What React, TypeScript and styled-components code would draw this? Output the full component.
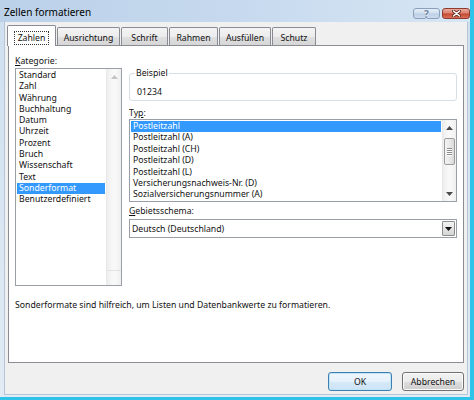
import React from "react";
import styled, { createGlobalStyle } from "styled-components";

const UI_FONT = `"Noto Sans", "Open Sans", "DejaVu Sans", sans-serif`;

const GlobalStyle = createGlobalStyle`
  *, *::before, *::after { box-sizing: border-box; }
  html, body { margin: 0; padding: 0; }
  body {
    width: 474px;
    height: 400px;
    overflow: hidden;
    background: #2ec4ea;
    font-family: ${UI_FONT};
    font-size: 8.7px;
    color: #111;
  }
`;

/* ---------- window chrome ---------- */

const Desktop = styled.div`
  width: 474px;
  height: 400px;
  display: flex;
  padding: 0 4px 3px 0;
  background: #2ec4ea;
`;

const Window = styled.div`
  flex: 1;
  min-width: 0;
  display: flex;
  flex-direction: column;
  padding: 0 2px 2px 4px;
  background: linear-gradient(180deg, #c0d5eb 0px, #d0e0f0 24px, #e2ebf4 100%);
`;

const TitleBar = styled.div`
  flex: none;
  height: 22px;
  display: flex;
  align-items: flex-start;
  margin: 0 -2px 0 -4px;
  padding-left: 4px;
  background: linear-gradient(90deg, #bbd1e9 0%, #c6d9ee 50%, #d7e6f4 100%);
`;

const TitleText = styled.div`
  padding-top: 5px;
  font-size: 10px;
  line-height: 14px;
  color: #000;
`;

const CaptionGroup = styled.div`
  margin-left: auto;
  margin-top: 8px;
  display: flex;
  gap: 2px;
`;

const CaptionButton = styled.div<{ $close?: boolean }>`
  width: ${(p) => (p.$close ? 28 : 27)}px;
  height: 11px;
  display: flex;
  align-items: center;
  justify-content: center;
  border: 1px solid ${(p) => (p.$close ? "#8f3b30" : "#8aa0ba")};
  border-radius: 3px;
  background: ${(p) =>
    p.$close
      ? "linear-gradient(180deg, #eaa99a 0%, #d9806f 48%, #c5462f 52%, #d8705b 100%)"
      : "linear-gradient(180deg, #e6eef7 0%, #cfdeee 48%, #bccfe5 52%, #cadcef 100%)"};
  font-size: 10px;
  font-weight: bold;
  line-height: 1;
  color: #6f86a3;
  text-shadow: 0 1px 0 rgba(255, 255, 255, 0.8);
`;

const Client = styled.div`
  flex: 1;
  display: flex;
  flex-direction: column;
  background: #f0f0f0;
  border: 1px solid #b4c5d7;
  border-top: none;
  padding: 3px 3px 0 3px;
`;

/* ---------- tabs ---------- */

const TabStrip = styled.div`
  position: relative;
  z-index: 1;
  height: 21px;
  margin: 0 0 -1px -1px;
  display: flex;
  align-items: flex-end;
  gap: 1px;
`;

const Tab = styled.div<{ $active?: boolean; $w: number }>`
  width: ${(p) => p.$w}px;
  height: ${(p) => (p.$active ? 21 : 18)}px;
  margin-bottom: ${(p) => (p.$active ? 0 : 1)}px;
  padding-top: ${(p) => (p.$active ? 4 : 3)}px;
  display: flex;
  align-items: center;
  justify-content: center;
  border: 1px solid #898c95;
  border-bottom: none;
  border-radius: 2px 2px 0 0;
  background: ${(p) =>
    p.$active
      ? "#ffffff"
      : "linear-gradient(180deg, #f4f4f4 0%, #ececec 50%, #e0e0e0 51%, #d6d6d6 100%)"};
  line-height: 12px;
  white-space: nowrap;
`;

const FocusText = styled.span`
  padding: 0 3px;
  border: 1px dotted #333;
  line-height: 12px;
`;

const Panel = styled.div`
  flex: none;
  height: 318px;
  display: flex;
  flex-direction: column;
  border: 1px solid #898c95;
  background: #ffffff;
  padding: 9px 6px 0;
`;

const Columns = styled.div`
  display: grid;
  grid-template-columns: 107px 328px;
  column-gap: 7px;
  align-items: start;
`;

const Column = styled.div<{ $top?: number }>`
  display: flex;
  flex-direction: column;
  padding-top: ${(p) => p.$top ?? 0}px;
`;

const FieldLabel = styled.div<{ $gap?: number }>`
  height: 12px;
  line-height: 12px;
  margin-top: ${(p) => p.$gap ?? 0}px;
  white-space: nowrap;
`;

const Key = styled.span`
  text-decoration: underline;
  text-underline-offset: 1px;
`;

/* ---------- list boxes ---------- */

const ListBox = styled.div<{ $h: number; $gap?: number }>`
  height: ${(p) => p.$h}px;
  margin-top: ${(p) => p.$gap ?? 0}px;
  display: flex;
  border: 1px solid #9a9ea6;
  background: #ffffff;
  overflow: hidden;
`;

const ListItems = styled.div`
  flex: 1;
  min-width: 0;
  padding: 1px;
`;

const ListItem = styled.div<{ $selected?: boolean; $lh: number }>`
  height: ${(p) => p.$lh}px;
  line-height: ${(p) => p.$lh}px;
  padding-left: 2px;
  white-space: nowrap;
  background: ${(p) => (p.$selected ? "#3399ff" : "transparent")};
  color: ${(p) => (p.$selected ? "#ffffff" : "#111")};
`;

const ScrollBar = styled.div<{ $w: number }>`
  flex: none;
  width: ${(p) => p.$w}px;
  display: flex;
  flex-direction: column;
  background: linear-gradient(90deg, #eeeeee 0%, #f8f8f8 40%, #f8f8f8 60%, #efefef 100%);
  border-left: 1px solid #e8e8e8;
`;

const ArrowCell = styled.div`
  height: 15px;
  flex: none;
  display: flex;
  align-items: center;
  justify-content: center;
`;

const Track = styled.div`
  flex: 1;
  padding: 3px 1px 0;
`;

const Thumb = styled.div`
  height: 27px;
  display: flex;
  flex-direction: column;
  align-items: center;
  justify-content: center;
  gap: 1px;
  border: 1px solid #9c9c9c;
  border-radius: 2px;
  background: linear-gradient(90deg, #f3f3f3 0%, #e9e9e9 50%, #d9d9d9 100%);
`;

const Grip = styled.div`
  width: 5px;
  height: 1px;
  background: #8c8c8c;
  box-shadow: 0 1px 0 #ffffff;
`;

const BottomCap = styled.div`
  height: 15px;
  flex: none;
  border-top: 1px solid #e2e2e2;
  display: flex;
  align-items: center;
  justify-content: center;
`;

const Arrow = ({ down, color }: { down?: boolean; color: string }) => (
  <svg width="7" height="4" viewBox="0 0 7 4">
    <polygon points={down ? "0,0 7,0 3.5,4" : "0,4 7,4 3.5,0"} fill={color} />
  </svg>
);

/* ---------- group box ---------- */

const Group = styled.fieldset`
  margin: 0;
  min-width: 0;
  padding: 7px 6px 2px 7px;
  border: 1px solid #d5dfe5;
  border-radius: 3px;
`;

const GroupTitle = styled.legend`
  margin-left: -2px;
  padding: 0 1px;
  line-height: 12px;
`;

const SampleValue = styled.div`
  line-height: 12px;
  height: 12px;
`;

/* ---------- combo box ---------- */

const Combo = styled.div`
  height: 19px;
  margin-top: 2px;
  display: flex;
  align-items: center;
  border: 1px solid #9a9ea6;
  background: #ffffff;
  padding: 1px 0 1px 2px;
`;

const ComboText = styled.div`
  flex: 1;
  line-height: 12px;
`;

const ComboButton = styled.div`
  flex: none;
  width: 13px;
  height: 15px;
  margin-right: 1px;
  display: flex;
  align-items: center;
  justify-content: center;
  border: 1px solid #8d8d8d;
  border-radius: 1px;
  background: linear-gradient(180deg, #f4f4f4 0%, #e4e4e4 50%, #d4d4d4 100%);
`;

const Hint = styled.div`
  margin-top: 13px;
  line-height: 12px;
`;

/* ---------- dialog buttons ---------- */

const ButtonRow = styled.div`
  display: flex;
  justify-content: flex-end;
  gap: 10px;
  padding-top: 9px;
`;

const DialogButton = styled.div<{ $default?: boolean; $w: number }>`
  width: ${(p) => p.$w}px;
  height: 19px;
  display: flex;
  align-items: center;
  justify-content: center;
  border: 1px solid ${(p) => (p.$default ? "#3c7fb1" : "#707070")};
  border-radius: 3px;
  background: ${(p) =>
    p.$default
      ? "linear-gradient(180deg, #f0f7fc 0%, #e5f1fb 50%, #d6eaf8 51%, #cde4f5 100%)"
      : "linear-gradient(180deg, #f2f2f2 0%, #ebebeb 50%, #dddddd 51%, #cfcfcf 100%)"};
  box-shadow: ${(p) =>
    p.$default ? "inset 0 0 0 1px #bfe4fa" : "inset 0 0 0 1px #fbfbfb"};
  line-height: 12px;
`;

/* ---------- data ---------- */

const categories = [
  "Standard",
  "Zahl",
  "Währung",
  "Buchhaltung",
  "Datum",
  "Uhrzeit",
  "Prozent",
  "Bruch",
  "Wissenschaft",
  "Text",
  "Sonderformat",
  "Benutzerdefiniert",
];

const types = [
  "Postleitzahl",
  "Postleitzahl (A)",
  "Postleitzahl (CH)",
  "Postleitzahl (D)",
  "Postleitzahl (L)",
  "Versicherungsnachweis-Nr. (D)",
  "Sozialversicherungsnummer (A)",
];

const tabs: { label: string; w: number }[] = [
  { label: "Zahlen", w: 49 },
  { label: "Ausrichtung", w: 63 },
  { label: "Schrift", w: 47 },
  { label: "Rahmen", w: 49 },
  { label: "Ausfüllen", w: 52 },
  { label: "Schutz", w: 44 },
];

export default function App() {
  return (
    <>
      <GlobalStyle />
      <Desktop>
        <Window>
          <TitleBar>
            <TitleText>Zellen formatieren</TitleText>
            <CaptionGroup>
              <CaptionButton>?</CaptionButton>
              <CaptionButton $close>
                <svg width="9" height="7" viewBox="0 0 9 7">
                  <path d="M1.5 1 L7.5 6 M7.5 1 L1.5 6" stroke="#5a2018" strokeWidth="3" strokeLinecap="round" />
                  <path d="M1.5 1 L7.5 6 M7.5 1 L1.5 6" stroke="#ffffff" strokeWidth="1.6" strokeLinecap="round" />
                </svg>
              </CaptionButton>
            </CaptionGroup>
          </TitleBar>

          <Client>
            <TabStrip>
              {tabs.map((t, i) => (
                <Tab key={t.label} $w={t.w} $active={i === 0}>
                  {i === 0 ? <FocusText>{t.label}</FocusText> : t.label}
                </Tab>
              ))}
            </TabStrip>

            <Panel>
              <Columns>
                <Column>
                  <FieldLabel>
                    <Key>K</Key>ategorie:
                  </FieldLabel>
                  <ListBox $h={218} $gap={1}>
                    <ListItems>
                      {categories.map((c) => (
                        <ListItem key={c} $lh={11.3} $selected={c === "Sonderformat"}>
                          {c}
                        </ListItem>
                      ))}
                    </ListItems>
                    <ScrollBar $w={15}>
                      <ArrowCell>
                        <Arrow color="#c4c4c4" />
                      </ArrowCell>
                      <Track />
                      <BottomCap />
                    </ScrollBar>
                  </ListBox>
                </Column>

                <Column $top={12}>
                  <Group>
                    <GroupTitle>Beispiel</GroupTitle>
                    <SampleValue>01234</SampleValue>
                  </Group>

                  <FieldLabel $gap={6}>
                    Ty<Key>p</Key>:
                  </FieldLabel>
                  <ListBox $h={83}>
                    <ListItems>
                      {types.map((t, i) => (
                        <ListItem key={t} $lh={11.4} $selected={i === 0}>
                          {t}
                        </ListItem>
                      ))}
                    </ListItems>
                    <ScrollBar $w={14}>
                      <ArrowCell>
                        <Arrow color="#4a4a4a" />
                      </ArrowCell>
                      <Track>
                        <Thumb>
                          <Grip />
                          <Grip />
                          <Grip />
                          <Grip />
                        </Thumb>
                      </Track>
                      <ArrowCell>
                        <Arrow down color="#4a4a4a" />
                      </ArrowCell>
                    </ScrollBar>
                  </ListBox>

                  <FieldLabel $gap={3}>
                    <Key>G</Key>ebietsschema:
                  </FieldLabel>
                  <Combo>
                    <ComboText>Deutsch (Deutschland)</ComboText>
                    <ComboButton>
                      <Arrow down color="#111" />
                    </ComboButton>
                  </Combo>
                </Column>
              </Columns>

              <Hint>Sonderformate sind hilfreich, um Listen und Datenbankwerte zu formatieren.</Hint>
            </Panel>

            <ButtonRow>
              <DialogButton $default $w={64}>
                OK
              </DialogButton>
              <DialogButton $w={62}>Abbrechen</DialogButton>
            </ButtonRow>
          </Client>
        </Window>
      </Desktop>
    </>
  );
}
